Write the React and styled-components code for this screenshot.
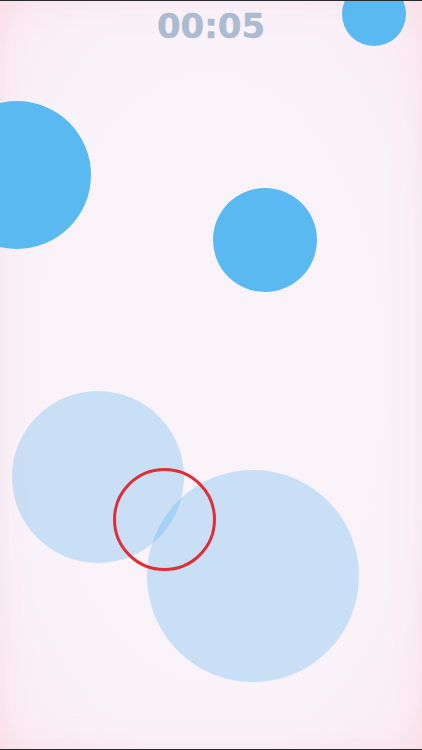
import React from 'react';
import styled, { createGlobalStyle } from 'styled-components';

const GlobalStyle = createGlobalStyle`
  html, body {
    margin: 0;
    padding: 0;
    background: #faf2f9;
  }
`;

const bubbles = [
  { x: 374, y: 13, r: 32, solid: true },
  { x: 17, y: 174, r: 74, solid: true },
  { x: 265, y: 239, r: 52, solid: true },
  { x: 98, y: 476, r: 86, solid: false },
  { x: 253, y: 575, r: 106, solid: false },
];

const App = () => {
  return (
    <>
      <GlobalStyle />
      <Stage>
        <Timer>00:05</Timer>
        {bubbles.map((b, i) => (
          <Bubble
            key={i}
            $solid={b.solid}
            style={{
              left: b.x - b.r,
              top: b.y - b.r,
              width: b.r * 2,
              height: b.r * 2,
            }}
          />
        ))}
        <Target />
      </Stage>
    </>
  );
};

const Stage = styled.div`
  position: relative;
  width: 422px;
  height: 750px;
  box-sizing: border-box;
  overflow: hidden;
  border-top: 1px solid #2a2a2a;
  border-bottom: 1px solid #2a2a2a;
  background: radial-gradient(
    ellipse at center,
    #faf3fa 0%,
    #faf2f9 72%,
    #fbecf3 92%,
    #fae4ec 100%
  );
  box-shadow: inset 0 0 30px rgba(245, 205, 218, 0.35);
`;

const Timer = styled.div`
  position: relative;
  z-index: 2;
  padding-top: 8px;
  text-align: center;
  font-family: 'DejaVu Sans', 'Liberation Sans', sans-serif;
  font-weight: bold;
  font-size: 34px;
  line-height: 34px;
  color: #abbbd1;
  -webkit-text-stroke: 0.4px #abbbd1;
`;

const Bubble = styled.div`
  position: absolute;
  border-radius: 50%;
  background: ${({ $solid }) =>
    $solid ? '#5bb9f1' : 'rgba(91, 180, 240, 0.3)'};
`;

const Target = styled.div`
  position: absolute;
  left: 113px;
  top: 467px;
  width: 103px;
  height: 103px;
  box-sizing: border-box;
  border-radius: 50%;
  border: 3px solid #df2e35;
  z-index: 3;
`;

export default App;
